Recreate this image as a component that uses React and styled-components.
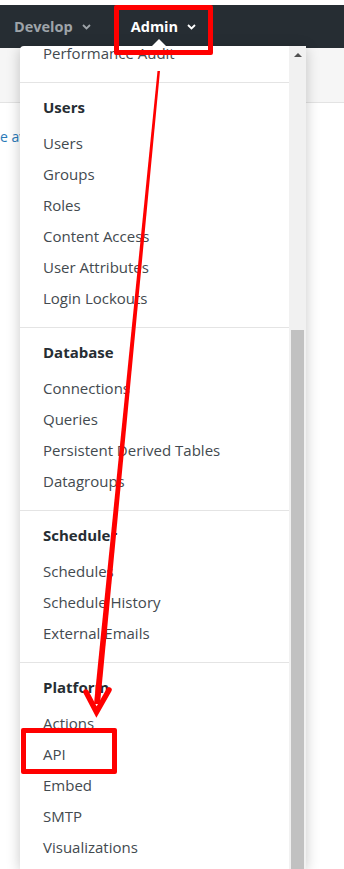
import React from "react"
import styled, { createGlobalStyle } from "styled-components"

const GlobalStyle = createGlobalStyle`
  html, body {
    margin: 0;
    padding: 0;
    background: #ffffff;
    font-family: "Open Sans", "Noto Sans", sans-serif;
    overflow: hidden;
  }
`

const Page = styled.div`
  position: relative;
  width: 344px;
  height: 869px;
  overflow: hidden;
  background: #ffffff;
  padding-top: 5px;
  box-sizing: border-box;
`

const NavBar = styled.div`
  display: flex;
  align-items: center;
  height: 43px;
  background: #262d33;
  padding-left: 14px;
  gap: 40px;
`

const NavItem = styled.div`
  display: flex;
  align-items: center;
  gap: 9px;
  font-size: 14.5px;
  font-weight: 700;
  color: ${p => (p.active ? "#ffffff" : "#9ea4a9")};
`

const SubBar = styled.div`
  height: 54px;
  background: #f6f6f6;
  border-bottom: 1px solid #e3e3e3;
`

const Content = styled.div`
  width: 20px;
  overflow: hidden;
  padding-top: 24px;
  font-size: 14px;
  color: #2a7ab8;
  white-space: nowrap;
`

const Menu = styled.div`
  position: absolute;
  top: 46px;
  left: 20px;
  width: 286px;
  height: 823px;
  display: flex;
  background: #ffffff;
  border-radius: 4px 4px 0 0;
  box-shadow: 0 2px 14px rgba(0, 0, 0, 0.22);
`

const Caret = styled.div`
  position: absolute;
  top: -7px;
  left: 132px;
  width: 0;
  height: 0;
  border-left: 7px solid transparent;
  border-right: 7px solid transparent;
  border-bottom: 7px solid #ffffff;
`

const ScrollArea = styled.div`
  flex: 1;
  overflow: hidden;
  border-radius: 4px 0 0 0;
`

const List = styled.div`
  margin-top: -8px;
`

const Section = styled.div`
  padding: ${p => (p.first ? "0" : "9px")} 0 13px;
  border-bottom: 1px solid #e4e4e4;
`

const Header = styled.div`
  height: 31px;
  line-height: 31px;
  padding-left: 23px;
  margin-bottom: 5px;
  font-size: 15px;
  font-weight: 700;
  color: #262d33;
`

const Item = styled.div`
  height: 31px;
  line-height: 31px;
  padding-left: 23px;
  font-size: 15px;
  color: #434a4f;
  white-space: nowrap;
`

const ScrollBar = styled.div`
  width: 17px;
  display: flex;
  flex-direction: column;
  background: #f1f1f1;
`

const ScrollButton = styled.div`
  height: 17px;
  display: flex;
  align-items: center;
  justify-content: center;
  &::before {
    content: "";
    border-left: 4px solid transparent;
    border-right: 4px solid transparent;
    border-bottom: 4px solid #505050;
  }
`

const Thumb = styled.div`
  flex: 1;
  margin: 267px 2px 0;
  background: #c1c1c1;
`

const Callout = styled.div`
  position: absolute;
  top: ${p => p.top}px;
  left: ${p => p.left}px;
  width: ${p => p.w}px;
  height: ${p => p.h}px;
  box-sizing: border-box;
  border: 5px solid #ff0000;
  border-radius: 2px;
  pointer-events: none;
`

const ArrowLayer = styled.svg`
  position: absolute;
  top: 0;
  left: 0;
  pointer-events: none;
`

const Chevron = ({ color }) => (
  <svg width="9" height="6" viewBox="0 0 9 6">
    <path d="M1 1 L4.5 4.5 L8 1" fill="none" stroke={color} strokeWidth="1.8" />
  </svg>
)

const sections = [
  { first: true, items: ["Performance Audit"] },
  {
    title: "Users",
    items: ["Users", "Groups", "Roles", "Content Access", "User Attributes", "Login Lockouts"],
  },
  {
    title: "Database",
    items: ["Connections", "Queries", "Persistent Derived Tables", "Datagroups"],
  },
  {
    title: "Scheduler",
    items: ["Schedules", "Schedule History", "External Emails"],
  },
  {
    title: "Platform",
    items: ["Actions", "API", "Embed", "SMTP", "Visualizations"],
  },
]

export default function App() {
  return (
    <>
      <GlobalStyle />
      <Page>
        <NavBar>
          <NavItem>
            Develop <Chevron color="#9ea4a9" />
          </NavItem>
          <NavItem active>
            Admin <Chevron color="#ffffff" />
          </NavItem>
        </NavBar>
        <SubBar />
        <Content>e available</Content>

        <Menu>
          <Caret />
          <ScrollArea>
            <List>
              {sections.map((section, i) => (
                <Section key={i} first={section.first}>
                  {section.title && <Header>{section.title}</Header>}
                  {section.items.map(item => (
                    <Item key={item}>{item}</Item>
                  ))}
                </Section>
              ))}
            </List>
          </ScrollArea>
          <ScrollBar>
            <ScrollButton />
            <Thumb />
          </ScrollBar>
        </Menu>

        <Callout top={5} left={114} w={99} h={50} />
        <Callout top={728} left={21} w={96} h={46} />

        <ArrowLayer width="344" height="869" viewBox="0 0 344 869">
          <polygon points="157.5,71 160,71 100,704 94,704" fill="#ff0000" />
          <polyline
            points="86,692 96.5,712 109,690"
            fill="none"
            stroke="#ff0000"
            strokeWidth="5.5"
            strokeLinejoin="miter"
            strokeLinecap="round"
          />
        </ArrowLayer>
      </Page>
    </>
  )
}
